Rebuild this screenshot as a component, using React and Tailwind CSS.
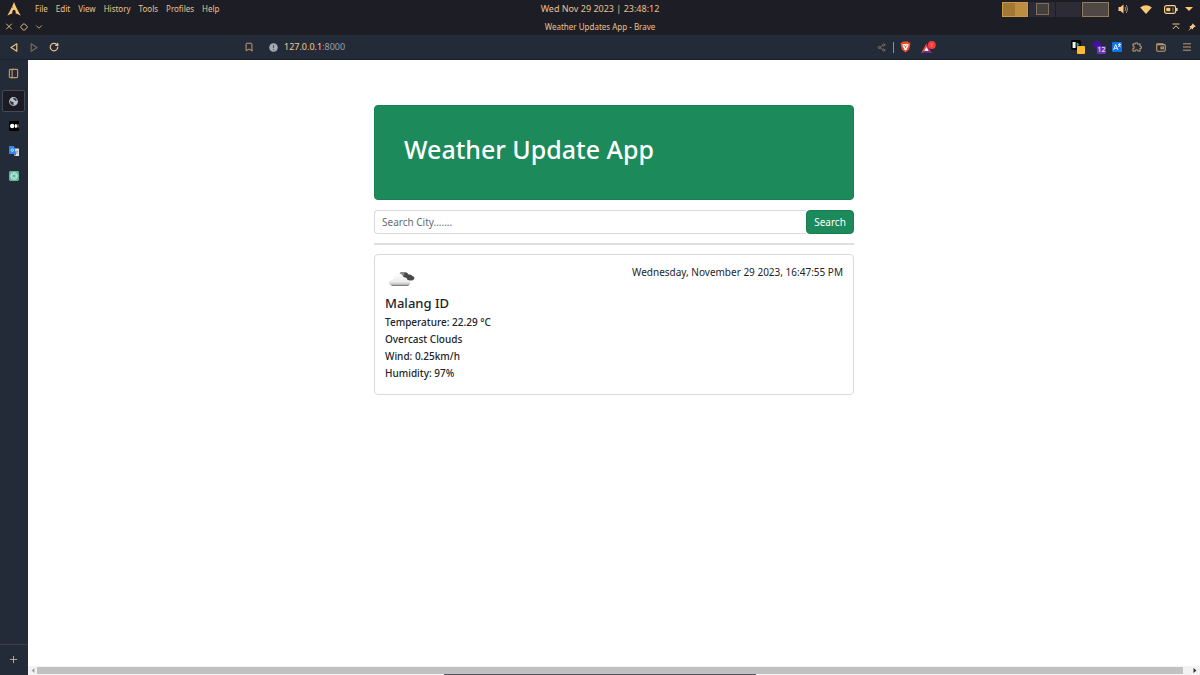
import { ChevronDown, Diamond, Bookmark, Share2, Plus, X, Menu, PanelLeft, RotateCw } from 'lucide-react';

const MENUS = ['File', 'Edit', 'View', 'History', 'Tools', 'Profiles', 'Help'];

const WEATHER = {
  city: 'Malang ID',
  date: 'Wednesday, November 29 2023, 16:47:55 PM',
  lines: ['Temperature: 22.29 °C', 'Overcast Clouds', 'Wind: 0.25km/h', 'Humidity: 97%'],
};

function IconButton({ label, className = '', children }) {
  return (
    <button type="button" aria-label={label} className={`flex items-center justify-center shrink-0 ${className}`}>
      {children}
    </button>
  );
}

function Workspaces() {
  return (
    <div className="flex gap-px h-[15px] mr-[9px]">
      <div className="flex w-[26px] border border-[#cb9a49]">
        <div className="flex-1 bg-[#a27733]" />
        <div className="flex-1 bg-[#bd8e42]" />
      </div>
      <div className="flex w-[26px] items-center justify-center bg-[#2c2b36]">
        <div className="w-[13px] h-3 border border-[#82715a] bg-[#45403f]" />
      </div>
      <div className="w-[25px] bg-[#2c2b36]" />
      <div className="w-[27px] border border-[#927d5e] bg-[#504844]" />
    </div>
  );
}

// Desktop panel: launcher, global menu, clock and tray
function DesktopPanel() {
  return (
    <div className="grid grid-cols-[1fr_auto_1fr] items-center h-[18px] shrink-0">
      <div className="flex items-center">
        <IconButton label="Application launcher" className="w-[28px]">
          <svg width="14" height="14" viewBox="0 0 14 14" fill="#fdc873">
            <path d="M7 0 C6.4 1.7 5.9 2.9 5.1 4.6 L6.2 5.6 L4.7 5.3 C3.7 7.7 2.3 10.2 0.3 13.6 C2.3 12.4 3.8 11.7 5.3 11.4 C5 9.5 5.7 7.9 7 7.8 C8.3 7.9 9 9.5 8.7 11.4 C10.2 11.7 11.7 12.4 13.7 13.6 C10.9 8.6 8.6 4.3 7 0 Z" />
          </svg>
        </IconButton>
        <nav className="flex gap-2 pl-[7px] text-[8px]">
          {MENUS.map((m) => (
            <button key={m} type="button">{m}</button>
          ))}
        </nav>
      </div>
      <time>Wed Nov 29 2023 | 23:48:12</time>
      <div className="flex items-center justify-end pr-[7px]">
        <Workspaces />
        <svg width="11" height="10" viewBox="0 0 11 10" className="mr-[11px]">
          <path d="M0.5 3 H2.5 L5.5 0.5 V9.5 L2.5 7 H0.5 Z" fill="#f5c987" />
          <path d="M7 3 Q8.3 5 7 7 M8.3 1 Q10.8 5 8.3 9" fill="none" stroke="#a88c65" strokeWidth="1" />
        </svg>
        <svg width="12" height="9" viewBox="0 0 12 9" className="mr-3">
          <path d="M0.2 2.5 Q6 -2 11.8 2.5 L6 9 Z" fill="#fdc873" />
        </svg>
        <svg width="14" height="9" viewBox="0 0 14 9" className="mr-[7px]">
          <rect x="0.6" y="0.6" width="11" height="7.8" rx="1.8" fill="none" stroke="#fbd08b" strokeWidth="1.2" />
          <rect x="2.3" y="2.8" width="4" height="3.4" fill="#fdc873" />
          <path d="M9 2.4 V6.6" fill="none" stroke="#c9a26a" strokeWidth="0.8" />
          <rect x="12" y="3" width="1.6" height="3" fill="#fbd08b" />
        </svg>
        <svg width="8" height="4" viewBox="0 0 8 4">
          <path d="M0 0 H8 L4 4 Z" fill="#fdc873" />
        </svg>
      </div>
    </div>
  );
}

function TitleBar() {
  return (
    <div className="grid grid-cols-[1fr_auto_1fr] items-center h-[17px] shrink-0">
      <div className="flex items-center gap-[5px] pl-1">
        <IconButton label="Close" className="w-[10px]"><X size={11} strokeWidth={2.2} /></IconButton>
        <IconButton label="Maximize" className="w-[10px]"><Diamond size={8} strokeWidth={3} /></IconButton>
        <IconButton label="Minimize" className="w-[10px]"><ChevronDown size={14} strokeWidth={1.9} /></IconButton>
      </div>
      <h1 className="text-[8px]">Weather Updates App - Brave</h1>
      <div className="flex items-center justify-end gap-2 pr-1">
        <IconButton label="Keep above">
          <svg width="8" height="7" viewBox="0 0 8 7" fill="none" stroke="currentColor">
            <path d="M0.5 1 H7.5 M0.8 6 L4 2.8 L7.2 6" />
          </svg>
        </IconButton>
        <IconButton label="Pin window">
          <svg width="8" height="8" viewBox="0 0 8 8" fill="#f5c987">
            <path d="M4.6 0.2 L7.8 3.4 L6.8 3.7 L5 5.2 L5 6.6 L3.4 5.6 L0.3 7.9 L2.4 4.7 L1.4 3 L2.9 3 L4.4 1.2 Z" />
          </svg>
        </IconButton>
      </div>
    </div>
  );
}

function Extensions() {
  return (
    <div className="flex items-center pr-2">
      <IconButton label="Extension" className="mr-[7px]">
        <svg width="14" height="14" viewBox="0 0 14 14">
          <rect width="10" height="10" rx="2" fill="#050505" />
          <rect x="1.6" y="2" width="3" height="6" rx="0.6" fill="#f4f4f4" />
          <path d="M5.6 2 L8.5 4.5 L5.6 7 Z" fill="#27a270" />
          <rect x="6" y="6" width="8" height="8" rx="1" fill="#fbbc34" />
        </svg>
      </IconButton>
      <IconButton label="Extension, 12 notifications" className="relative w-[14px] h-[14px] mr-[6px]">
        <svg width="14" height="14" viewBox="0 0 14 14">
          <path d="M5 0 L10.5 4.5 L5 9.5 L0 4.5 Z" fill="#45109e" />
        </svg>
        <span className="absolute right-0 bottom-0 w-[9px] h-2 rounded-[1px] bg-[#6735b3] text-white text-[7px] leading-[8px] text-center">
          12
        </span>
      </IconButton>
      <IconButton label="Translate extension" className="mr-[10px]">
        <svg width="10" height="10" viewBox="0 0 10 10">
          <rect width="10" height="10" rx="1" fill="#0874ee" />
          <path d="M1.5 8 L3.7 2.5 L6 8 M2.3 6.3 H5.2 M6 2.4 H9 M7.5 1.3 V2.4 M6.3 5 L8.5 2.5 M6.5 3 L8.7 5" fill="none" stroke="#fff" strokeWidth="0.9" />
        </svg>
      </IconButton>
      <IconButton label="Extensions" className="mr-[14px]">
        <svg width="10" height="10" viewBox="0 0 10 10" fill="none" stroke="#c29b6c" strokeWidth="1.1">
          <path d="M1 2 H3 Q3 0.7 4.4 0.7 Q5.7 0.7 5.7 2 H8 V4 Q9.4 4.2 9.4 5.4 Q9.4 6.6 8 6.8 V9 H6 Q5.8 7.7 4.6 7.7 Q3.4 7.7 3.2 9 H1 V6.8 Q2.2 6.6 2.2 5.4 Q2.2 4.2 1 4 Z" />
        </svg>
      </IconButton>
      <IconButton label="Wallet" className="mr-4">
        <svg width="10" height="9" viewBox="0 0 10 9" fill="none" stroke="#c29b6c" strokeWidth="1.1">
          <path d="M0.7 1.7 V7 Q0.7 8.2 1.9 8.2 H8 Q9.3 8.2 9.3 7 V2.8 Q9.3 1.6 8 1.6 H0.7 Q0.7 0.8 1.6 0.8 H7.5" />
          <rect x="5" y="4" width="2.4" height="1.8" />
        </svg>
      </IconButton>
      <IconButton label="Menu">
        <svg width="10" height="8" viewBox="0 0 10 8" stroke="#c29b6c" strokeWidth="1">
          <path d="M1 0.8 H9 M1 4 H9 M1 7.2 H9" />
        </svg>
      </IconButton>
    </div>
  );
}

function Toolbar() {
  return (
    <div className="flex items-center h-[25px] shrink-0 bg-[#242b38] border-b border-[#1b212b]">
      <div className="flex items-center gap-[10px] pl-[9px]">
        <IconButton label="Back" className="w-[10px]">
          <svg width="8" height="9" viewBox="0 0 8 9" fill="none" stroke="#edbd80" strokeWidth="1.2" strokeLinejoin="round">
            <path d="M6.8 0.8 V8.2 L1 4.5 Z" />
          </svg>
        </IconButton>
        <IconButton label="Forward" className="w-[10px]">
          <svg width="8" height="9" viewBox="0 0 8 9" fill="none" stroke="#7a6b58" strokeWidth="1.2" strokeLinejoin="round">
            <path d="M1.2 0.8 V8.2 L7 4.5 Z" />
          </svg>
        </IconButton>
        <IconButton label="Reload" className="w-[10px]">
          <RotateCw size={10} strokeWidth={3} />
        </IconButton>
      </div>

      <div className="flex flex-1 items-center ml-[183px] mr-[135px]">
        <IconButton label="Bookmark this tab" className="w-[14px] mr-[13px]">
          <Bookmark size={10} strokeWidth={2.4} color="#c69c6b" />
        </IconButton>
        <svg width="9" height="9" viewBox="0 0 9 9" className="mr-[6px] shrink-0">
          <circle cx="4.5" cy="4.5" r="4.3" fill="#a5abb4" />
          <path d="M4.5 2 V5 M4.5 6 V7" stroke="#4d5561" strokeWidth="1.1" />
        </svg>
        <a href="http://127.0.0.1:8000" className="flex-1 text-[#9a9fa8]">
          <span className="text-[#fac98a]">127.0.0.1</span>:8000
        </a>
        <div className="flex items-center">
          <IconButton label="Share"><Share2 size={9} strokeWidth={2.4} color="#7d6e5c" /></IconButton>
          <span className="w-px h-[11px] ml-[7px] mr-[6px] bg-[#8a8e95]" />
          <IconButton label="Brave Shields" className="mr-[10px]">
            <svg width="11" height="12" viewBox="0 0 11 12">
              <path d="M3 0.5 H8 L9 1.5 L10.4 2 L10.2 4 L9.2 8.5 L5.5 11.6 L1.8 8.5 L0.8 4 L0.6 2 L2 1.5 Z" fill="#f14d24" />
              <path d="M2.3 3.2 L4.3 2.9 L5.5 3.3 L6.7 2.9 L8.7 3.2 L8 6 L6.7 7.4 L7 8.3 L5.5 9.6 L4 8.3 L4.3 7.4 L3 6 Z" fill="#fff" />
              <path d="M3.5 4.6 L5 5 M7.5 4.6 L6 5 M5.5 5 V7" stroke="#f14d24" strokeWidth="0.8" />
            </svg>
          </IconButton>
          <IconButton label="Brave Rewards">
            <svg width="15" height="13" viewBox="0 0 15 13">
              <path d="M5.5 2.5 L0.2 12 H10.8 Z" fill="#b12a68" />
              <path d="M5.5 2.5 L0.2 12 L5.5 9 Z" fill="#f05028" />
              <path d="M0.2 12 H10.8 L5.5 9 Z" fill="#612b91" />
              <path d="M5.5 6 L3.3 10 H7.7 Z" fill="#fff" />
              <circle cx="10.8" cy="4" r="3.9" fill="#f43d3c" />
              <path d="M10.8 2 V5.8" stroke="#ff8a85" strokeWidth="0.8" />
            </svg>
          </IconButton>
        </div>
      </div>

      <Extensions />
    </div>
  );
}

function Sidebar() {
  return (
    <aside className="flex flex-col w-[28px] shrink-0 bg-[#242b38]">
      <div className="flex flex-col items-center pt-2 pr-px">
        <IconButton label="Toggle tabs panel" className="h-[11px] mb-[11px]">
          <PanelLeft size={11} strokeWidth={2.4} color="#c69c6b" />
        </IconButton>
        <IconButton label="Weather Updates App" className="w-[23px] h-[22px] mb-[9px] rounded-[2px] border border-[#444957] bg-[#1b1b24]">
          <svg width="9" height="9" viewBox="0 0 9 9">
            <circle cx="4.5" cy="4.5" r="4.4" fill="#bcc2cc" />
            <path d="M1 3.4 Q3 5 4.6 5 Q4 6.5 5.2 7.7 Q3.2 8.2 1.9 6.9 Q0.9 5.5 1 3.4 Z M4 1 Q6 0.5 7.5 2.3 L7.6 4 Q6.3 4.3 6 3.2 Q4.3 3 4 1 Z" fill="#30343f" />
          </svg>
        </IconButton>
        <IconButton label="Medium" className="mb-[15px]">
          <svg width="10" height="10" viewBox="0 0 10 10">
            <rect width="10" height="10" rx="1" fill="#000" />
            <circle cx="3.2" cy="5" r="2.2" fill="#fff" />
            <ellipse cx="6.9" cy="5" rx="1.2" ry="2" fill="#fff" />
            <path d="M9 3.4 V6.6" stroke="#fff" strokeWidth="0.7" />
          </svg>
        </IconButton>
        <IconButton label="Google Translate" className="mb-[15px]">
          <svg width="10" height="10" viewBox="0 0 10 10">
            <path d="M4 2.5 H9.5 Q10 2.5 10 3 V9.5 Q10 10 9.5 10 H5.5 Z" fill="#dfe3e8" />
            <path d="M0.5 0 H5 L7.3 8 H0.5 Q0 8 0 7.5 V0.5 Q0 0 0.5 0 Z" fill="#2f86ec" />
            <path d="M4.6 3.5 Q4 2.6 3 2.9 Q2 3.3 2.1 4.3 Q2.3 5.5 3.5 5.4 Q4.6 5.2 4.6 4.2 H3.5" fill="none" stroke="#fff" strokeWidth="0.7" />
            <path d="M7 5 H9.2 M8.8 5 Q8.3 6.8 7.2 7.4 M7.4 6 L9 7.5" fill="none" stroke="#6f7c8c" strokeWidth="0.6" />
            <path d="M5.3 8 H7.3 L6 9.8 Z" fill="#1b55ba" />
          </svg>
        </IconButton>
        <IconButton label="ChatGPT">
          <svg width="10" height="10" viewBox="0 0 10 10">
            <rect width="10" height="10" rx="1.4" fill="#5fb79c" />
            <g fill="none" stroke="#d3efe6" strokeWidth="0.6">
              <ellipse cx="5" cy="5" rx="3.8" ry="2" />
              <ellipse cx="5" cy="5" rx="3.8" ry="2" transform="rotate(60 5 5)" />
              <ellipse cx="5" cy="5" rx="3.8" ry="2" transform="rotate(120 5 5)" />
            </g>
          </svg>
        </IconButton>
      </div>
      <IconButton label="New tab" className="h-[31px] pr-px pb-px mt-auto border-t border-[#3d4049]">
        <Plus size={11} strokeWidth={1.8} color="#dfba8b" />
      </IconButton>
    </aside>
  );
}

function OvercastIcon() {
  return (
    <svg width="32" height="31" viewBox="0 0 32 31" role="img" aria-label="Overcast clouds">
      <defs>
        <linearGradient id="cloud" x1="0" y1="0" x2="0" y2="1">
          <stop offset="0" stopColor="#ffffff" />
          <stop offset="0.7" stopColor="#ececec" />
          <stop offset="1" stopColor="#b5b5b5" />
        </linearGradient>
      </defs>
      <path d="M14.5 8.5 Q16 6 19 7.4 Q22 6.5 23.5 9.5 Q27 9 27.2 11 Q30 11.5 29 14.2 Q28.2 15.6 25.5 15.4 Q22 16 19.5 13 Z" fill="#494949" />
      <path d="M14.5 8.5 Q16 6 19 7.4 L19.5 11 Z" fill="#8b8b8b" />
      <path d="M6.5 20.3 Q3.6 19.5 4.2 16.9 Q4.8 14.8 8.2 14.7 Q8.8 9.5 12.8 8.6 Q17.5 8.3 18.4 12.3 Q22 12 22.5 15 Q25.8 16 25 18.5 Q24.3 20.2 22 20.3 Z" fill="url(#cloud)" />
      <path d="M6.5 20.4 H22 Q23.7 20.2 24.3 19.4" fill="none" stroke="#747474" strokeWidth="1" />
    </svg>
  );
}

function WeatherPage() {
  return (
    <main className="flex-1 min-h-0 overflow-hidden pt-[45px] text-[10px] text-[#212529]">
      <div className="flex flex-col gap-[10px] w-full max-w-[480px] mx-auto">
        <header className="rounded-[4px] bg-[#1c8a5b] border border-[#19804f] px-[29px] pt-[28px] pb-[35px]">
          <h2 className="text-[25px] leading-[30px] font-medium text-white">Weather Update App</h2>
        </header>

        <form className="flex h-6" onSubmit={(e) => e.preventDefault()}>
          <input
            type="text"
            aria-label="Search city"
            placeholder="Search City......."
            className="flex-1 min-w-0 px-[7px] rounded-l-[4px] border border-r-0 border-[#d6dade] placeholder:text-[#646b72] outline-none"
          />
          <button type="submit" className="w-12 rounded-[4px] border border-[#157f4f] bg-[#1c8a5b] text-white">
            Search
          </button>
        </form>

        <hr className="-my-px border-t-2 border-[#dfe0e1]" />

        <section className="flex items-start justify-between rounded-[4px] border border-[#d9dadb] px-[10px] pt-[10px] pb-[15px]">
          <div>
            <OvercastIcon />
            <h3 className="text-[13px] leading-[15px] mb-[2px] font-medium">{WEATHER.city}</h3>
            {WEATHER.lines.map((line) => (
              <p key={line} className="leading-[12px] mt-[5px] font-medium">{line}</p>
            ))}
          </div>
          <time className="leading-[15px]">{WEATHER.date}</time>
        </section>
      </div>
    </main>
  );
}

function Scrollbar() {
  return (
    <div className="flex items-center justify-between h-[9px] shrink-0 bg-[#f3f3f3] px-[3px]">
      <svg width="4" height="5" viewBox="0 0 4 5"><path d="M3.5 0 V5 L0.5 2.5 Z" fill="#a0a0a0" /></svg>
      <div className="flex-1 h-[7px] ml-[2px] mr-[10px] bg-[#c1c1c1]" />
      <svg width="4" height="5" viewBox="0 0 4 5"><path d="M0.5 0 V5 L3.5 2.5 Z" fill="#303030" /></svg>
    </div>
  );
}

export default function App() {
  return (
    <div className="relative flex flex-col h-screen overflow-hidden bg-[#1d1d26] text-[#eac38c] font-['Noto_Sans',sans-serif] text-[9px] leading-[12px]">
      <DesktopPanel />
      <TitleBar />
      <Toolbar />
      <div className="flex flex-1 min-h-0">
        <Sidebar />
        <div className="flex flex-col flex-1 min-w-0 bg-white">
          <WeatherPage />
          <Scrollbar />
        </div>
      </div>
      {/* edge of the auto-hidden dock */}
      <div className="absolute bottom-0 left-1/2 -translate-x-1/2 w-[26%] h-px bg-[#55535a]" />
    </div>
  );
}
